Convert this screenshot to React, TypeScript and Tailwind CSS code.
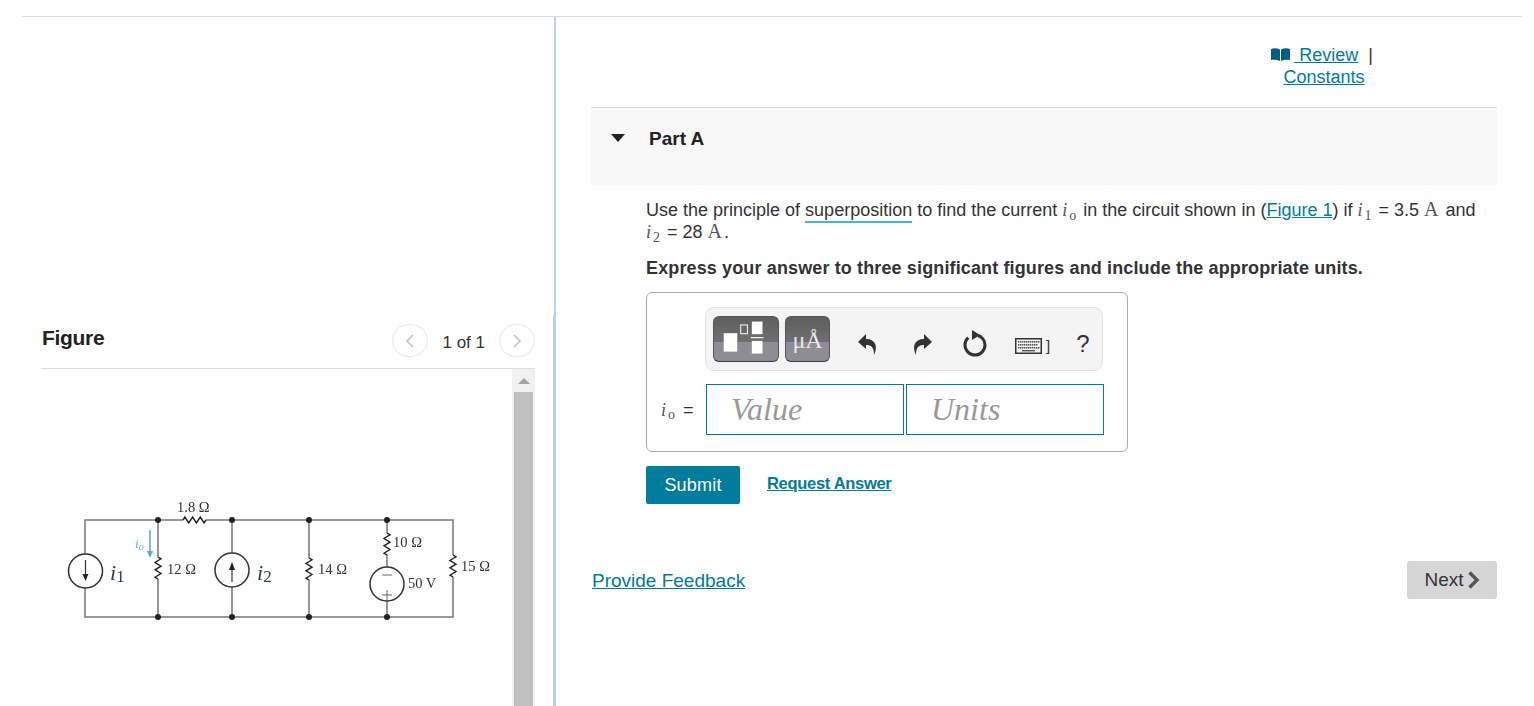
import type { ReactNode } from 'react';

const linkClass = 'text-[#007c9c] underline';

function MathVar({ sub }: { sub: string }) {
  return (
    <span className="font-['Liberation_Serif',serif] italic text-[#555] pr-[2px]">
      <span className="pr-[2px]">i</span>
      <sub className="text-[14px] not-italic">{sub}</sub>
    </span>
  );
}

function Unit({ children }: { children: ReactNode }) {
  return <span className="font-['Liberation_Serif',serif] text-[20px] leading-none text-[#555] mr-[2px]">{children}</span>;
}

function vZigzag(x: number, y0: number, y1: number) {
  const step = (y1 - y0) / 6;
  let d = `M${x} ${y0}`;
  for (let i = 0; i < 6; i++) {
    const dir = i % 2 === 0 ? 3 : -3;
    d += ` L${x + dir} ${y0 + step * (i + 0.5)}`;
  }
  return `${d} L${x} ${y1}`;
}

function hZigzag(y: number, x0: number, x1: number) {
  const step = (x1 - x0) / 6;
  let d = `M${x0} ${y}`;
  for (let i = 0; i < 6; i++) {
    const dir = i % 2 === 0 ? -3 : 3;
    d += ` L${x0 + step * (i + 0.5)} ${y + dir}`;
  }
  return `${d} L${x1} ${y}`;
}

function Circuit() {
  const nodes = [158, 232, 309, 387];
  return (
    <svg viewBox="60 490 440 140" className="w-[440px] h-[140px] blur-[0.4px]" fontFamily="'Liberation Serif', serif">
      {/* wires */}
      <path
        d="M85 554 V520 H183 M206 520 H453 V555 M453 577 V617 H85 V588 M158 520 V557 M158 579 V617 M232 520 V553 M232 587 V617 M309 520 V558 M309 580 V617 M387 520 V533 M387 555 V567 M387 601 V617"
        fill="none"
        stroke="#777"
        strokeWidth="1.5"
      />
      <g fill="none" stroke="#222" strokeWidth="1.4">
        <path d={hZigzag(520, 183, 206)} />
        <path d={vZigzag(158, 557, 579)} />
        <path d={vZigzag(309, 558, 580)} />
        <path d={vZigzag(387, 533, 555)} />
        <path d={vZigzag(453, 555, 577)} />
      </g>
      <g fill="#fff" stroke="#333" strokeWidth="1.5">
        <circle cx="85.5" cy="571" r="17" />
        <circle cx="232" cy="570" r="17" />
        <circle cx="387" cy="584" r="17" />
      </g>
      {nodes.map((x) => (
        <g key={x} fill="#222">
          <circle cx={x} cy="520" r="3" />
          <circle cx={x} cy="617" r="3" />
        </g>
      ))}
      {/* source arrows */}
      <path d="M85.5 560 V576" stroke="#333" strokeWidth="1.2" />
      <path d="M82.5 574 H88.5 L85.5 581 Z" fill="#222" />
      <path d="M232 568 V582" stroke="#333" strokeWidth="1.2" />
      <path d="M229 570 H235 L232 562 Z" fill="#222" />
      <path d="M382 575 H392 M382 595 H392 M387 590 V600" stroke="#666" strokeWidth="1" />
      {/* current arrow */}
      <path d="M150 530 V552" stroke="#4da9e0" strokeWidth="1.5" />
      <path d="M147 551 H153 L150 558 Z" fill="#4da9e0" />
      <text x="135" y="548" fontSize="13" fontStyle="italic" fill="#5ab0e4">
        i
        <tspan fontSize="10" dy="2">
          o
        </tspan>
      </text>
      <g fontSize="14.5" fill="#333">
        <text x="177" y="512">1.8 Ω</text>
        <text x="167" y="574">12 Ω</text>
        <text x="318" y="574">14 Ω</text>
        <text x="393" y="547">10 Ω</text>
        <text x="461" y="571">15 Ω</text>
        <text x="408" y="588">50 V</text>
      </g>
      <g fontSize="22" fontStyle="italic" fill="#2f3f50">
        <text x="110" y="580">
          i
          <tspan fontSize="17" fontStyle="normal" dy="2">
            1
          </tspan>
        </text>
        <text x="257" y="580">
          i
          <tspan fontSize="17" fontStyle="normal" dy="2">
            2
          </tspan>
        </text>
      </g>
    </svg>
  );
}

function PagerButton({ dir }: { dir: 'left' | 'right' }) {
  return (
    <button className="w-[36px] h-[33px] rounded-full border border-[#e6e6e6] bg-white flex items-center justify-center">
      <svg width="12" height="16" viewBox="0 0 12 16" fill="none" stroke="#c4c4c4" strokeWidth="1.6">
        <path d={dir === 'left' ? 'M9 2 L3 8 L9 14' : 'M3 2 L9 8 L3 14'} />
      </svg>
    </button>
  );
}

function FigurePanel() {
  return (
    <div className="w-[534px] h-[690px] shrink-0 pt-[303px] pl-[19px] relative overflow-hidden">
      <div className="w-[494px] h-[49px] border-b border-[#ddd] flex items-start justify-between">
        <h2 className="ml-[1px] text-[21px] leading-[36px] font-bold tracking-[-0.3px] text-[#222]">Figure</h2>
        <div className="flex items-center gap-[14px] pt-[4px]">
          <PagerButton dir="left" />
          <span className="mt-[5px] text-[17px] text-[#333]">1 of 1</span>
          <PagerButton dir="right" />
        </div>
      </div>
      <div className="w-[494px] flex">
        <div className="w-[471px] pl-[19px] pt-[121px]">
          <Circuit />
        </div>
        <div className="w-[23px] h-[337px] bg-[#f1f1f1] px-[2px]">
          <div className="h-[23px] flex items-center justify-center">
            <div className="w-0 h-0 border-x-[6px] border-x-transparent border-b-[6px] border-b-[#a3a3a3]" />
          </div>
          <div className="h-[314px] bg-[#c1c1c1]" />
        </div>
      </div>
      {/* small overlap strip on the splitter */}
      <div className="absolute right-[2px] top-[298px] bottom-0 w-px bg-[#bdd0e2]" />
      <div className="absolute right-0 top-0 bottom-0 w-[2px] bg-[#bdd0e2]" />
    </div>
  );
}

function ToolButton({ children, className }: { children: ReactNode; className: string }) {
  return (
    <button
      className={`h-[46px] rounded-[6px] border border-[#555] border-b-[#3a3a3a] bg-[linear-gradient(to_bottom,#5f5f5f_0%,#6f6f6f_56%,#8e8d96_56%,#8e8d96_100%)] flex items-center justify-center ${className}`}
    >
      {children}
    </button>
  );
}

function Keyboard() {
  const rows = [
    { y: 3, n: 11 },
    { y: 6, n: 10 },
    { y: 9, n: 11 },
  ];
  return (
    <svg width="27" height="16" viewBox="0 0 27 16">
      <rect x="0.75" y="0.75" width="25.5" height="14.5" fill="none" stroke="#333" strokeWidth="1.5" />
      {rows.map((r) =>
        Array.from({ length: r.n }, (_, i) => (
          <rect key={`${r.y}-${i}`} x={3 + i * 2} y={r.y} width="1.4" height="1.6" fill="#555" />
        ))
      )}
      <rect x="7" y="12" width="13" height="1.4" fill="#555" />
    </svg>
  );
}

function Toolbar() {
  return (
    <div className="w-[398px] h-[64px] rounded-[9px] border border-[#e2e2e2] bg-[#f4f4f4] ml-[58px] pt-[8px] pl-[7px] flex items-start">
      <ToolButton className="w-[66px]">
        <svg width="66" height="46" viewBox="0 0 66 46">
          <rect x="10" y="17" width="14" height="19" fill="#fff" />
          <rect x="27.5" y="8.5" width="7" height="9" fill="none" stroke="#e8e8e8" strokeWidth="1.2" />
          <rect x="39" y="5" width="11" height="13" fill="#fff" />
          <rect x="38" y="21" width="13" height="1.2" fill="#fff" />
          <rect x="39" y="25" width="11" height="13" fill="#fff" />
        </svg>
      </ToolButton>
      <ToolButton className="w-[45px] ml-[6px]">
        <span className="font-['Liberation_Serif',serif] text-[24px] leading-none text-[#e8e8e8] pt-[2px]">μÅ</span>
      </ToolButton>
      <div className="flex items-center h-[46px] pt-[10px] text-[#333]">
        <svg width="22" height="24" viewBox="0 0 22 24" className="ml-[27px]" fill="#333">
          <path d="M9 2 L1 10 L9 17 V13 C14 13 17 15 17 23 C21 15 19 7 9 7 Z" />
        </svg>
        <svg width="22" height="24" viewBox="0 0 22 24" className="ml-[32px]" fill="#333">
          <path d="M13 2 L21 10 L13 17 V13 C8 13 5 15 5 23 C1 15 3 7 13 7 Z" />
        </svg>
        <svg width="26" height="28" viewBox="0 0 26 28" className="ml-[29px]" fill="none">
          <circle cx="13" cy="15" r="10" stroke="#333" strokeWidth="3" strokeDasharray="52 11" strokeDashoffset="-3" transform="rotate(-90 13 15)" />
          <path d="M10 0 L18 5 L10 10 Z" fill="#333" />
        </svg>
        <div className="ml-[27px] mt-[4px]">
          <Keyboard />
        </div>
        <span className="ml-[4px] mt-[4px] text-[15px]">]</span>
        <span className="ml-[26px] text-[24px] leading-none">?</span>
      </div>
    </div>
  );
}

function AnswerBox() {
  return (
    <div className="w-[482px] h-[160px] mt-[13px] rounded-[6px] border border-[#aaa] pt-[14px]">
      <Toolbar />
      <div className="flex items-center mt-[13px] pl-[14px]">
        <span className="w-[45px] text-[18px] text-[#333]">
          <MathVar sub="o" />
          <span className="ml-[6px]">=</span>
        </span>
        <div className="w-[198px] h-[51px] border border-[#007c9c] pl-[24px] font-['Liberation_Serif',serif] italic text-[32px] leading-[49px] text-[#999]">
          Value
        </div>
        <div className="w-[198px] h-[51px] ml-[2px] border border-[#007c9c] pl-[24px] font-['Liberation_Serif',serif] italic text-[32px] leading-[49px] text-[#999]">
          Units
        </div>
      </div>
    </div>
  );
}

function QuestionPanel() {
  return (
    <div className="flex-1 pl-[35px] pr-[25px]">
      <div className="h-[90px] pt-[27px] flex flex-col items-center pl-[560px] text-[18px] leading-[22px] text-[#333]">
        <div className="whitespace-nowrap pr-[4px]">
          <svg width="19" height="13" viewBox="0 0 19 13" className="inline-block align-[0px]" fill="#00607e">
            <path d="M0 1 C3 0 6 0 9 1.5 V13 C6 11.5 3 11.5 0 12 Z M10 1.5 C13 0 16 0 19 1 V12 C16 11.5 13 11.5 10 13 Z" />
          </svg>
          <a className={`${linkClass} ml-[4px]`}>&nbsp;Review</a> <span className="ml-[5px]">|</span>
        </div>
        <a className={linkClass}>Constants</a>
      </div>
      <div className="h-[78px] border-t border-[#ddd] bg-[#f8f8f8] flex items-start pt-[20px] pl-[20px]">
        <div className="w-0 h-0 mt-[6px] border-x-[7px] border-x-transparent border-t-[8px] border-t-[#222]" />
        <h3 className="ml-[24px] text-[19px] leading-[22px] font-bold text-[#222]">Part A</h3>
      </div>
      <div className="pl-[55px] pt-[14px] text-[18px] leading-[22px] text-[#333] whitespace-nowrap">
        <p>
          Use the principle of{' '}
          <span className="border-b-2 border-[#4ab5c4] pb-[1px]">superposition</span> to find the current{' '}
          <MathVar sub="o" /> in the circuit shown in (<a className={linkClass}>Figure 1</a>) if <MathVar sub="1" /> = 3.5{' '}
          <Unit>A</Unit> and
          <br />
          <MathVar sub="2" /> = 28 <Unit>A</Unit>.
        </p>
        <p className="mt-[14px] font-bold tracking-[0.13px]">
          Express your answer to three significant figures and include the appropriate units.
        </p>
        <AnswerBox />
        <div className="flex items-center mt-[14px]">
          <button className="w-[94px] h-[38px] rounded-[2px] bg-[#007c9c] text-white text-[18px] tracking-[0.2px]">Submit</button>
          <a className="ml-[27px] text-[16.5px] font-semibold tracking-[-0.3px] mb-[4px] text-[#007c9c] underline">Request Answer</a>
        </div>
      </div>
      <div className="flex items-center justify-between mt-[57px]">
        <a className={`${linkClass} ml-[1px] mt-[2px] text-[19px]`}>Provide Feedback</a>
        <button className="w-[90px] h-[38px] rounded-[3px] bg-[#d6d6d6] flex items-center justify-center gap-[3px] text-[19px] text-[#333]">
          Next
          <svg width="13" height="18" viewBox="0 0 13 18" fill="none" stroke="#555" strokeWidth="3.4">
            <path d="M2.5 1.5 L10 9 L2.5 16.5" />
          </svg>
        </button>
      </div>
    </div>
  );
}

export default function App() {
  return (
    <div className="h-[706px] overflow-hidden bg-white pt-4 pl-[22px] pr-[12px] font-['Liberation_Sans',Arial,sans-serif]">
      <div className="flex border-t border-[#ddd]">
        <FigurePanel />
        <QuestionPanel />
      </div>
    </div>
  );
}
